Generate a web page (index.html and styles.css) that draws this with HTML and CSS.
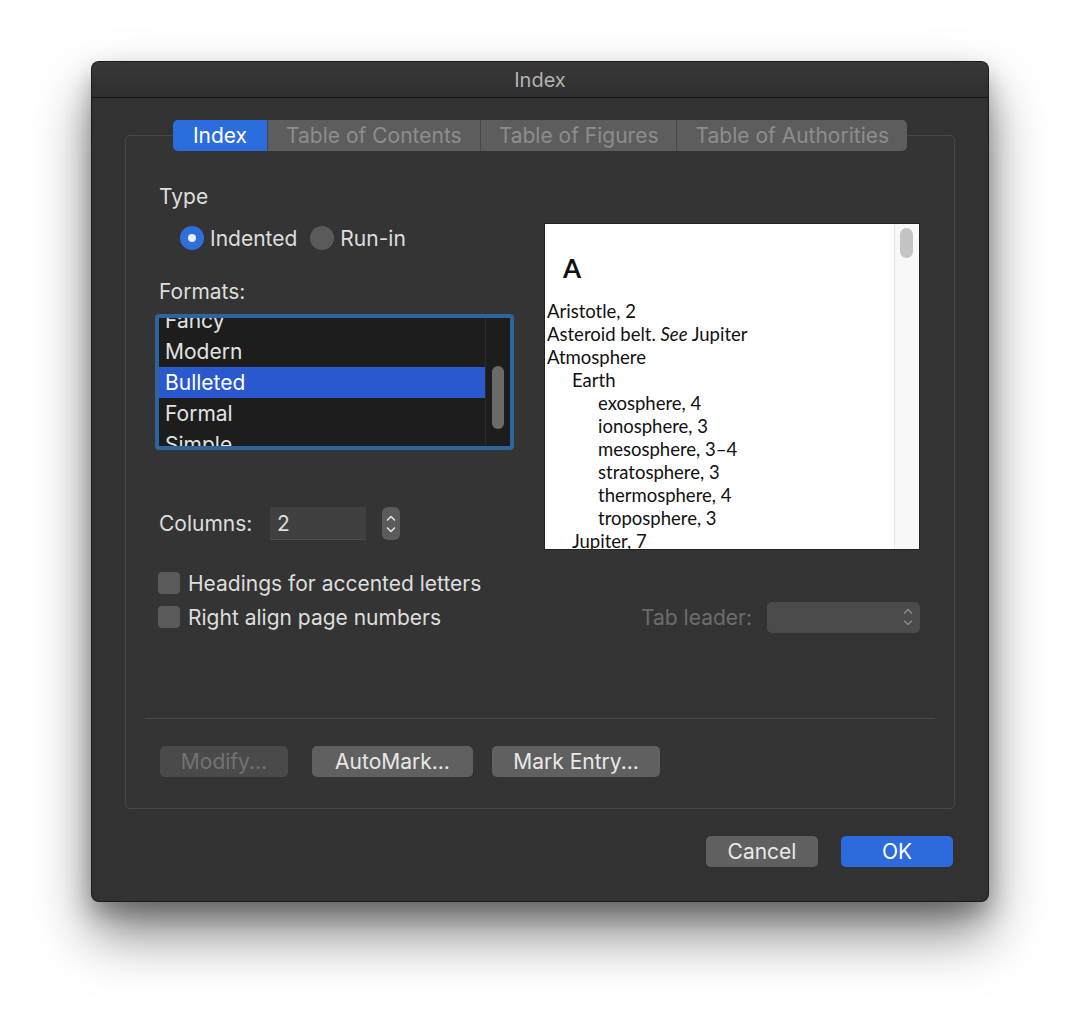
FILE: index.html
```html
<!DOCTYPE html>
<html lang="en">
<head>
    <meta charset="UTF-8">
    <title>Index</title>
    <link rel="stylesheet" href="styles.css">
</head>
<body>
    <div class="window">
        <div class="titlebar">Index</div>
        <div class="content">
            <div class="tabs">
                <div class="tab active">Index</div>
                <div class="tab">Table of Contents</div>
                <div class="tab">Table of Figures</div>
                <div class="tab">Table of Authorities</div>
            </div>
            <div class="group">
                <div class="main">
                    <div class="left">
                        <div class="label">Type</div>
                        <div class="radios">
                            <span class="radio on"></span><span class="radio-text">Indented</span>
                            <span class="radio"></span><span class="radio-text">Run-in</span>
                        </div>
                        <div class="label formats-label">Formats:</div>
                        <div class="list">
                            <div class="list-items">
                                <div class="item first">Fancy</div>
                                <div class="item">Modern</div>
                                <div class="item selected">Bulleted</div>
                                <div class="item">Formal</div>
                                <div class="item">Simple</div>
                            </div>
                            <div class="list-scroll"><div class="list-thumb"></div></div>
                        </div>
                        <div class="columns">
                            <span class="columns-label">Columns:</span>
                            <span class="field">2</span>
                            <span class="stepper">
                                <svg width="12" height="26" viewBox="0 0 12 26"><path d="M2.5 9 L6 5.5 L9.5 9 M2.5 17 L6 20.5 L9.5 17" fill="none" stroke="#e2e2e2" stroke-width="1.6" stroke-linecap="round" stroke-linejoin="round"/></svg>
                            </span>
                        </div>
                    </div>
                    <div class="preview">
                        <div class="preview-text">
                            <div class="letter">A</div>
                            <div class="entry">Aristotle, 2</div>
                            <div class="entry">Asteroid belt. <i>See</i> Jupiter</div>
                            <div class="entry">Atmosphere</div>
                            <div class="entry lvl1">Earth</div>
                            <div class="entry lvl2">exosphere, 4</div>
                            <div class="entry lvl2">ionosphere, 3</div>
                            <div class="entry lvl2">mesosphere, 3–4</div>
                            <div class="entry lvl2">stratosphere, 3</div>
                            <div class="entry lvl2">thermosphere, 4</div>
                            <div class="entry lvl2">troposphere, 3</div>
                            <div class="entry lvl1">Jupiter, 7</div>
                        </div>
                        <div class="preview-scroll"><div class="preview-thumb"></div></div>
                    </div>
                </div>
                <div class="options">
                    <div class="check-row">
                        <span class="checkbox"></span><span>Headings for accented letters</span>
                    </div>
                    <div class="check-row">
                        <span class="checkbox"></span><span>Right align page numbers</span>
                        <span class="leader-label">Tab leader:</span>
                        <span class="popup">
                            <svg width="12" height="24" viewBox="0 0 12 24"><path d="M2.5 8 L6 4.5 L9.5 8 M2.5 16 L6 19.5 L9.5 16" fill="none" stroke="#8a8a8a" stroke-width="1.5" stroke-linecap="round" stroke-linejoin="round"/></svg>
                        </span>
                    </div>
                </div>
                <div class="sep"></div>
                <div class="buttons">
                    <span class="btn disabled modify">Modify...</span>
                    <span class="btn automark">AutoMark...</span>
                    <span class="btn markentry">Mark Entry...</span>
                </div>
            </div>
            <div class="footer">
                <span class="btn cancel">Cancel</span>
                <span class="btn ok">OK</span>
            </div>
        </div>
    </div>
</body>
</html>
```

FILE: styles.css
```css
body, html {
    margin: 0;
    padding: 0;
    background: #ffffff;
    font-family: Inter, "Liberation Sans", sans-serif;
    font-size: 21px;
    color: #dedede;
}
body {
    min-height: 1024px;
    padding: 62px 0 0 92px;
    box-sizing: border-box;
}
.window {
    width: 896px;
    height: 839px;
    background: #323232;
    border-radius: 7px;
    box-shadow: 0 0 0 1px #1a1a1a, 0 32px 55px rgba(0,0,0,0.5), 0 12px 24px rgba(0,0,0,0.28);
    overflow: hidden;
}
.titlebar {
    height: 35px;
    line-height: 37px;
    text-align: center;
    color: #b3b3b3;
    font-size: 20px;
    background: linear-gradient(#383838, #2f2f2f);
    border-bottom: 1px solid #121212;
}
.content {
    padding: 22px 33px 34px 33px;
}
.tabs {
    display: flex;
    justify-content: center;
    height: 31px;
    position: relative;
    z-index: 1;
}
.tab {
    padding: 0 18px;
    line-height: 31px;
    background: #5d5d5d;
    color: #8d8d8d;
    border-left: 1px solid #474747;
}
.tab:first-child {
    border-left: none;
    border-radius: 5px 0 0 5px;
    padding: 0 20px;
}
.tab:last-child {
    border-radius: 0 5px 5px 0;
}
.tab.active {
    background: #2c6ddd;
    color: #ffffff;
}
.group {
    margin-top: -16px;
    height: 674px;
    box-sizing: border-box;
    border: 1px solid #464646;
    border-radius: 5px;
    background: #343434;
    padding-bottom: 32px;
}
.main {
    display: flex;
    justify-content: space-between;
    align-items: flex-start;
    padding: 0 34px 0 29px;
}
.left {
    margin-top: 49px;
    width: 360px;
}
.label {
    line-height: 24px;
    margin-left: 4px;
}
.radios {
    display: flex;
    align-items: center;
    height: 26px;
    margin: 16px 0 0 25px;
}
.radio {
    width: 24px;
    height: 24px;
    border-radius: 50%;
    background: #5a5a5a;
    margin-right: 6px;
    box-sizing: border-box;
}
.radio.on {
    border: 8px solid #2e6fdc;
    background-color: #e8eefc;
}
.radio-text {
    margin-right: 13px;
}
.formats-label {
    margin-top: 29px;
}
.list {
    margin-top: 10px;
    width: 359px;
    height: 136px;
    box-sizing: border-box;
    border: 4px solid #2f659a;
    border-radius: 4px;
    background: #1d1d1d;
    display: flex;
    overflow: hidden;
}
.list-items {
    flex: 1;
    overflow: hidden;
    border-right: 1px solid #2b2b2b;
}
.item {
    height: 31px;
    line-height: 31px;
    padding-left: 6px;
    color: #e2e2e2;
}
.item.first {
    margin-top: -13px;
}
.item.selected {
    background: #2a58cf;
    color: #ffffff;
}
.list-scroll {
    width: 24px;
    padding-top: 48px;
    box-sizing: border-box;
}
.list-thumb {
    width: 12px;
    height: 63px;
    margin-left: 6px;
    border-radius: 6px;
    background: #6a6a6a;
}
.columns {
    display: flex;
    align-items: center;
    margin-top: 57px;
    height: 33px;
    padding-left: 4px;
}
.columns-label {
    width: 111px;
}
.field {
    width: 96px;
    height: 33px;
    line-height: 34px;
    padding-left: 7px;
    background: #404040;
    border-bottom: 1px solid #4c4c4c;
    box-sizing: border-box;
}
.stepper {
    margin-left: 16px;
    width: 18px;
    height: 33px;
    border-radius: 6px;
    background: #5b5b5b;
    display: flex;
    align-items: center;
    justify-content: center;
}
.preview {
    margin-top: 87px;
    width: 376px;
    height: 327px;
    background: #ffffff;
    display: flex;
    overflow: hidden;
    border: 1px solid #222;
    box-sizing: border-box;
}
.preview-text {
    flex: 1;
    padding: 29px 0 0 2px;
    color: #111;
    font-family: Lato, "Open Sans", sans-serif;
    font-size: 18.5px;
}
.letter {
    font-size: 26px;
    font-weight: bold;
    line-height: 30px;
    margin: 0 0 17px 16px;
}
.entry {
    line-height: 23px;
}
.lvl1 {
    padding-left: 25px;
}
.lvl2 {
    padding-left: 51px;
}
.preview-scroll {
    width: 24px;
    background: #f8f8f8;
    border-left: 1px solid #e6e6e6;
    padding-top: 4px;
}
.preview-thumb {
    width: 13px;
    height: 30px;
    margin-left: 5px;
    border-radius: 7px;
    background: #c4c4c4;
}
.options {
    margin-top: 18px;
    padding: 0 34px 0 32px;
}
.check-row {
    display: flex;
    align-items: center;
    height: 30px;
    margin-bottom: 4px;
}
.checkbox {
    width: 22px;
    height: 22px;
    border-radius: 4px;
    background: #5a5a5a;
    margin-right: 8px;
}
.leader-label {
    margin-left: auto;
    color: #6c6c6c;
    margin-right: 15px;
}
.popup {
    width: 153px;
    height: 31px;
    border-radius: 5px;
    background: #4b4b4b;
    display: flex;
    align-items: center;
    justify-content: flex-end;
    padding-right: 6px;
    box-sizing: border-box;
}
.sep {
    margin: 86px 19px 0 19px;
    height: 1px;
    background: #4b4b4b;
}
.buttons {
    display: flex;
    padding-left: 34px;
    margin-top: 27px;
}
.btn {
    height: 31px;
    line-height: 31px;
    text-align: center;
    border-radius: 5px;
    background: #606060;
    color: #e8e8e8;
    box-sizing: border-box;
}
.btn.disabled {
    background: #4a4a4a;
    color: #727272;
}
.modify {
    width: 128px;
}
.automark {
    width: 161px;
    margin-left: 24px;
}
.markentry {
    width: 168px;
    margin-left: 19px;
}
.footer {
    display: flex;
    justify-content: flex-end;
    margin-top: 27px;
    padding-right: 2px;
}
.cancel {
    width: 112px;
}
.ok {
    width: 112px;
    margin-left: 23px;
    background: #2d6ade;
    color: #ffffff;
}
```
